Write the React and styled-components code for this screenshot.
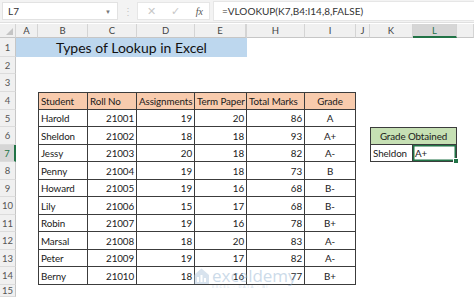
import React from "react"
import styled, { createGlobalStyle } from "styled-components"

const GlobalStyle = createGlobalStyle`
    html, body {
        margin: 0;
        padding: 0;
        background: #fff;
    }
    body {
        font-family: Lato, "Liberation Sans", sans-serif;
        overflow: hidden;
    }
`

const Window = styled.div`
    position: relative;
    width: 474px;
    height: 297px;
    overflow: hidden;
    background: #fff;
`

const FormulaBar = styled.div`
    display: flex;
    align-items: center;
    height: 23px;
    padding-left: 2px;
    background: #f3f3f3;
    border-bottom: 1px solid #e0e0e0;
    box-sizing: border-box;
`

const NameBox = styled.div`
    display: flex;
    align-items: center;
    justify-content: space-between;
    width: 116px;
    height: 18px;
    padding: 0 6px 0 5px;
    box-sizing: border-box;
    background: #fff;
    border: 1px solid #e2e2e2;
    font-size: 10px;
    color: #333;
`

const Caret = styled.span`
    font-size: 6px;
    color: #777;
`

const Grip = styled.div`
    width: 19px;
    text-align: center;
    color: #c4c4c4;
    font-size: 10px;
`

const FxButtons = styled.div`
    display: flex;
    align-items: center;
    justify-content: space-between;
    width: 73px;
    height: 18px;
    padding: 0 6px 0 9px;
    box-sizing: border-box;
    background: #fff;
    border: 1px solid #e6e6e6;
    color: #c8c8c8;
    font-size: 11px;
`

const Fx = styled.span`
    font-family: "Liberation Serif", serif;
    font-style: italic;
    font-size: 10px;
    color: #555;
`

const FormulaInput = styled.div`
    flex: 1;
    height: 18px;
    margin-left: 3px;
    padding-left: 8px;
    display: flex;
    align-items: center;
    background: #fff;
    border: 1px solid #e6e6e6;
    border-right: 0;
    font-size: 10px;
    color: #333;
`

const Sheet = styled.div`
    display: grid;
    margin-top: 1px;
    grid-template-columns: 16px 22px 50px 49px 58px 52px 58px 51px 14px 43px 44px 1fr;
    grid-template-rows: 14px 19px 17px 18px 18px 17px 18px 17px 18px 17px 18px 17px 18px 17px 18px 1fr;
    height: 273px;
`

const Corner = styled.div`
    position: relative;
    background: #f0f0f0;
    border-right: 1px solid #d4d4d4;
    border-bottom: 1px solid #c6c6c6;
    box-sizing: border-box;

    &::after {
        content: "";
        position: absolute;
        right: 2px;
        bottom: 2px;
        border-style: solid;
        border-width: 0 0 7px 7px;
        border-color: transparent transparent #c4c4c4 transparent;
    }
`

const ColHead = styled.div`
    display: flex;
    align-items: center;
    justify-content: center;
    font-size: 9.5px;
    color: ${p => (p.$active ? "#217346" : "#444")};
    background: ${p => (p.$active ? "#d6d6d6" : "#f0f0f0")};
    border-right: ${p => (p.$hidden ? "2px" : "1px")} solid #d4d4d4;
    border-bottom: ${p => (p.$active ? "2px solid #217346" : "1px solid #c6c6c6")};
    box-sizing: border-box;
`

const RowHead = styled.div`
    display: flex;
    align-items: center;
    justify-content: center;
    font-size: 9.5px;
    color: ${p => (p.$active ? "#217346" : "#555")};
    background: ${p => (p.$active ? "#d6d6d6" : "#f0f0f0")};
    border-right: ${p => (p.$active ? "2px solid #217346" : "1px solid #c6c6c6")};
    border-bottom: 1px solid #dcdcdc;
    box-sizing: border-box;
`

const Blank = styled.div``

const Title = styled.div`
    grid-column: span ${p => p.$span};
    display: flex;
    align-items: center;
    justify-content: center;
    background: #bdd7ee;
    font-size: 14px;
    color: #111;
`

const Cell = styled.div`
    position: relative;
    grid-column: span ${p => p.$span || 1};
    display: flex;
    align-items: center;
    justify-content: ${p => p.$align === "right" ? "flex-end" : p.$align === "center" ? "center" : "flex-start"};
    padding: 0 2px;
    box-sizing: border-box;
    font-size: 9.8px;
    letter-spacing: -0.1px;
    color: #1a1a1a;
    white-space: nowrap;
    overflow: hidden;
    background: ${p => p.$bg || "#fff"};
    border-right: 1px solid #3c3c3c;
    border-bottom: 1px solid #3c3c3c;
    border-left: ${p => (p.$first ? "1px solid #3c3c3c" : "0")};
    border-top: ${p => (p.$top ? "1px solid #3c3c3c" : "0")};
`

const Selected = styled(Cell)`
    overflow: visible;
    box-shadow: inset 0 0 0 1.5px #217346;

    &::after {
        content: "";
        position: absolute;
        right: -3px;
        bottom: -3px;
        width: 4px;
        height: 4px;
        background: #217346;
        border: 1px solid #fff;
    }
`

const Watermark = styled.div`
    position: absolute;
    left: 193px;
    top: 267px;
    display: flex;
    align-items: flex-start;
    gap: 2px;
    opacity: 0.45;
    pointer-events: none;
`

const MarkText = styled.div`
    display: flex;
    flex-direction: column;
    line-height: 1;
`

const MarkWord = styled.span`
    font-family: "Open Sans", sans-serif;
    font-size: 17px;
    color: #8fb0cf;
`

const MarkTag = styled.span`
    font-family: "Open Sans", sans-serif;
    font-size: 4px;
    color: #8fb0cf;
    letter-spacing: 1.5px;
    margin-top: 1px;
`

const columns = ["A", "B", "C", "D", "E", "H", "I", "J", "K", "L", ""]

const students = [
    ["Harold", 21001, 19, 20, 86, "A"],
    ["Sheldon", 21002, 18, 18, 93, "A+"],
    ["Jessy", 21003, 20, 18, 82, "A-"],
    ["Penny", 21004, 19, 18, 73, "B"],
    ["Howard", 21005, 19, 16, 68, "B-"],
    ["Lily", 21006, 15, 17, 68, "B-"],
    ["Robin", 21007, 19, 16, 78, "B+"],
    ["Marsal", 21008, 18, 20, 83, "A-"],
    ["Peter", 21009, 19, 17, 82, "A-"],
    ["Berny", 21010, 18, 16, 77, "B+"],
]

const headers = ["Student", "Roll No", "Assignments", "Term Paper", "Total Marks", "Grade"]
const HEAD_BG = "#f8cbad"
const GREEN_BG = "#c6e0b4"

const blanks = (n, key) => Array.from({ length: n }, (_, i) => <Blank key={`${key}-${i}`} />)

const tableRow = (cells, r, isHeader) =>
    cells.map((v, c) => {
        let align = "left"
        if (!isHeader && c > 0 && c < 5) align = "right"
        if (c === 5) align = "center"
        return (
            <Cell
                key={`t${r}-${c}`}
                $align={align}
                $first={c === 0}
                $top={isHeader}
                $bg={isHeader ? HEAD_BG : undefined}
            >
                {v}
            </Cell>
        )
    })

const buildRow = r => {
    const out = [<RowHead key={`rh${r}`} $active={r === 7}>{r}</RowHead>]
    if (r === 1) {
        out.push(<Title key="title" $span={5}>Types of Lookup in Excel</Title>)
        out.push(...blanks(6, "r1"))
        return out
    }
    if (r === 2 || r === 3 || r === 15) {
        out.push(...blanks(11, `r${r}`))
        return out
    }
    out.push(<Blank key={`a${r}`} />)
    if (r === 4) out.push(...tableRow(headers, r, true))
    else out.push(...tableRow(students[r - 5], r, false))
    out.push(<Blank key={`j${r}`} />)
    if (r === 6) {
        out.push(
            <Cell key="go" $span={2} $align="center" $first $top $bg={GREEN_BG}>
                Grade Obtained
            </Cell>
        )
    } else if (r === 7) {
        out.push(<Cell key="k7" $first>Sheldon</Cell>)
        out.push(<Selected key="l7">A+</Selected>)
    } else {
        out.push(...blanks(2, `kl${r}`))
    }
    out.push(<Blank key={`m${r}`} />)
    return out
}

const Logo = () => (
    <svg width="17" height="18" viewBox="0 0 17 18">
        <path d="M1 8 L8.5 1.5 L16 8 L16 17 L1 17 Z" fill="#a9c2da" />
        <rect x="4" y="10" width="2" height="5" fill="#fff" />
        <rect x="7.5" y="8" width="2" height="7" fill="#fff" />
        <rect x="11" y="11" width="2" height="4" fill="#fff" />
    </svg>
)

const App = () => {
    const rows = []
    for (let r = 1; r <= 15; r++) rows.push(...buildRow(r))
    return (
        <Window>
            <GlobalStyle />
            <FormulaBar>
                <NameBox>
                    <span>L7</span>
                    <Caret>▼</Caret>
                </NameBox>
                <Grip>⋮</Grip>
                <FxButtons>
                    <span>✕</span>
                    <span>✓</span>
                    <Fx>fx</Fx>
                </FxButtons>
                <FormulaInput>=VLOOKUP(K7,B4:I14,8,FALSE)</FormulaInput>
            </FormulaBar>
            <Sheet>
                <Corner />
                {columns.map((c, i) => (
                    <ColHead key={`ch${i}`} $active={c === "L"} $hidden={c === "E"}>
                        {c}
                    </ColHead>
                ))}
                {rows}
            </Sheet>
            <Watermark>
                <Logo />
                <MarkText>
                    <MarkWord>exceldemy</MarkWord>
                    <MarkTag>EXCEL · DATA · BI</MarkTag>
                </MarkText>
            </Watermark>
        </Window>
    )
}

export default App
